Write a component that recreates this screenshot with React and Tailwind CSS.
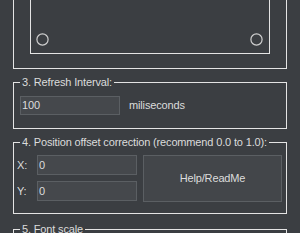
import React from "react";

function Group({ label, className, children }) {
  return (
    <div className={"relative ml-[13px] w-[274px] border border-[#e4e4e4] " + className}>
      <span className="absolute left-[6px] top-[-7px] bg-[#3b3e42] px-[2px] leading-[13px] whitespace-nowrap">
        {label}
      </span>
      {children}
    </div>
  );
}

function Circle() {
  return (
    <svg width="13" height="13" viewBox="0 0 13 13">
      <circle cx="6.5" cy="6.5" r="5.6" fill="none" stroke="#cfcfcf" strokeWidth="1.2" />
    </svg>
  );
}

export default function App() {
  return (
    <div
      className="w-[300px] h-[233px] overflow-hidden bg-[#3b3e42] text-[11px] tracking-[-0.15px] text-[#dcdcdc]"
      style={{ fontFamily: '"Liberation Sans", Arial, sans-serif' }}
    >
      <div className="ml-[13px] w-[274px] h-[69px] border border-t-0 border-[#e4e4e4]">
        <div className="ml-[16px] w-[240px] h-[54px] border border-t-0 border-[#e4e4e4] flex items-end justify-between pl-[5px] pr-[6px] pb-[7px]">
          <Circle />
          <Circle />
        </div>
      </div>

      <Group label="3. Refresh Interval:" className="mt-[13px] h-[47px]">
        <div className="flex items-center pl-[6px] pt-[13px]">
          <div className="w-[100px] h-[19px] border border-[#5b5f63] bg-[#45484c] flex items-center px-[1px] leading-[13px]">
            100
          </div>
          <span className="ml-[9px]">miliseconds</span>
        </div>
      </Group>

      <Group label="4. Position offset correction (recommend 0.0 to 1.0):" className="mt-[13px] h-[72px]">
        <div className="flex pl-[3px] pt-[12px]">
          <div className="flex flex-col gap-[6px]">
            <div className="flex items-center h-[20px]">
              <span className="w-[20px]">X:</span>
              <div className="w-[100px] h-[20px] border border-[#5b5f63] bg-[#45484c] flex items-center px-[1px]">0</div>
            </div>
            <div className="flex items-center h-[20px]">
              <span className="w-[20px]">Y:</span>
              <div className="w-[100px] h-[20px] border border-[#5b5f63] bg-[#45484c] flex items-center px-[1px]">0</div>
            </div>
          </div>
          <div className="ml-[6px] w-[139px] h-[47px] border border-[#5b5f63] bg-[#43464a] flex items-center justify-center">
            Help/ReadMe
          </div>
        </div>
      </Group>

      <Group label="5. Font scale" className="mt-[15px] h-[40px]" />
    </div>
  );
}
